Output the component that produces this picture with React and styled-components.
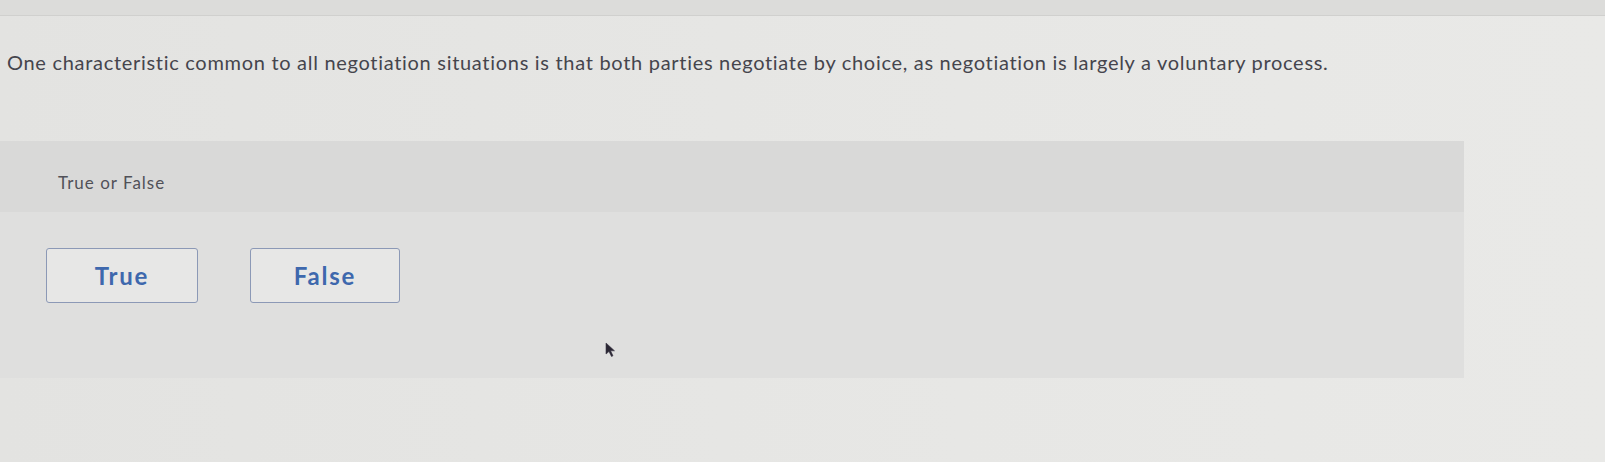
import React from "react";
import styled, { createGlobalStyle } from "styled-components";

const Global = createGlobalStyle`
  html, body {
    margin: 0;
    padding: 0;
    background: #e5e5e3;
  }
  body {
    font-family: Lato, "Open Sans", "Liberation Sans", sans-serif;
    -webkit-font-smoothing: antialiased;
  }
`;

const Page = styled.div`
  position: relative;
  width: 1605px;
  height: 462px;
  overflow: hidden;
  background: linear-gradient(90deg, #e3e3e1 0%, #e7e7e5 60%, #e9e9e7 100%);
`;

const TopStrip = styled.div`
  height: 15px;
  background: #dcdcda;
  border-bottom: 1px solid #d0d0ce;
`;

const Prompt = styled.p`
  margin: 34px 0 0 7px;
  font-size: 20px;
  line-height: 24px;
  color: #45454d;
  letter-spacing: 0.7px;
  white-space: nowrap;
`;

const Panel = styled.section`
  margin-top: 67px;
  width: 1464px;
  height: 237px;
  background: #dfdfde;
  display: flex;
  flex-direction: column;
`;

const PanelHeader = styled.div`
  height: 71px;
  background: #d9d9d8;
  display: flex;
  align-items: center;
  padding: 12px 0 0 58px;
  box-sizing: border-box;
  font-size: 17px;
  letter-spacing: 1px;
  color: #515158;
`;

const Choices = styled.div`
  display: flex;
  gap: 52px;
  padding: 36px 0 0 46px;
`;

const Choice = styled.button`
  width: ${(p) => p.$w}px;
  height: 55px;
  box-sizing: border-box;
  border: 1.5px solid #8c99b6;
  border-radius: 3px;
  background: #e7e7e6;
  color: #3e68ad;
  font-family: inherit;
  font-size: 24px;
  font-weight: 700;
  letter-spacing: 1.8px;
  cursor: pointer;
  padding: 0;
`;

const Pointer = styled.svg`
  position: absolute;
  left: 605px;
  top: 342px;
`;

export default function App() {
  return (
    <>
      <Global />
      <Page>
        <TopStrip />
        <Prompt>
          One characteristic common to all negotiation situations is that both parties negotiate by choice, as negotiation is largely a voluntary process.
        </Prompt>
        <Panel>
          <PanelHeader>True or False</PanelHeader>
          <Choices>
            <Choice $w={152}>True</Choice>
            <Choice $w={150}>False</Choice>
          </Choices>
        </Panel>
        <Pointer width="12" height="16" viewBox="0 0 12 16">
          <path d="M1 1 L1 12 L4 9.5 L6.5 14.5 L8 13.8 L5.6 8.8 L9.5 8.8 Z" fill="#2a2633" stroke="#3a3545" strokeWidth="0.6" />
        </Pointer>
      </Page>
    </>
  );
}
